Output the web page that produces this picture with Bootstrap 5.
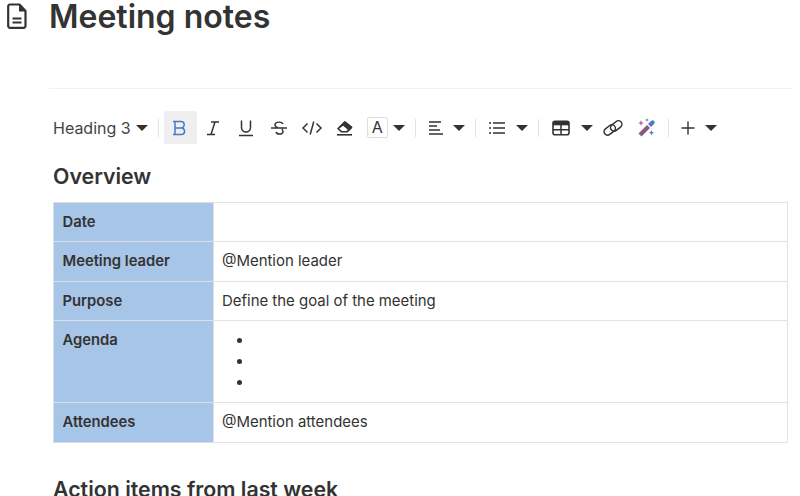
<!DOCTYPE html>
<html lang="en"><head><meta charset="utf-8"><title>Meeting notes</title>
<link href="https://cdn.jsdelivr.net/npm/bootstrap@5.3.0/dist/css/bootstrap.min.css" rel="stylesheet">
<style>
html,body{height:496px;overflow:hidden;background:#fff}
body{font-family:Inter,"Liberation Sans",sans-serif;color:#333;font-size:15px}
.page-wrap{padding-left:7px;padding-right:8px}
.doc-icon{width:42px;flex:none;padding-top:3px}
.doc-main{flex:1;min-width:0}
.doc-title{font-size:32px;font-weight:600;line-height:34px;margin:0;color:#333}
.doc-rule{height:1px;background:#f2f2f2;margin-top:54px;margin-bottom:22px}
.tool-bar{height:33px;padding-left:4px;color:#333}
.tool-label{font-size:16px;color:#444;margin-right:5px}
.tool-sep{width:1px;height:18px;background:#e3e3e3;flex:none}
.tool-btn{width:33px;height:33px;flex:none;display:flex;align-items:center;justify-content:center;border-radius:2px}
.tool-btn.on{background:#efefef}
.caret{width:0;height:0;border-left:6px solid transparent;border-right:6px solid transparent;border-top:6px solid #333;flex:none}
.color-box{width:21px;height:21px;border:1px solid #ddd;border-radius:2px;font-size:16px;line-height:19px;text-align:center;flex:none}
.gl-2{margin-left:2px}.gl-3{margin-left:3px}.gl-4{margin-left:4px}.gl-5{margin-left:5px}.gl-6{margin-left:6px}.gl-10{margin-left:10px}
.sec-head{font-size:21.33px;font-weight:600;line-height:24px;margin:0 0 0 4px;color:#333}
.first-head{margin-top:20px}
.notes-table{width:735px;margin:14px 0 0 4px;border-collapse:collapse;table-layout:fixed;font-size:14.95px;line-height:22px}
.notes-table th,.notes-table td{border:1px solid #e2e2e2;padding:8px 8px;vertical-align:top;height:39.4px}
.notes-table th{width:160px;background:#a7c5e6;font-weight:600;border-color:#d8dfe7;font-size:14.8px;padding-left:8.5px}
.notes-table td{font-weight:400;color:#333}
.notes-table ul{margin:0;padding:1px 0 0 32px;line-height:21px;height:65px}
.notes-table ul li{height:21px}
.notes-table ul li::marker{font-size:15px}
.next-head{margin-top:34px}
</style></head>
<body>
<div class="page-wrap d-flex">
  <div class="doc-icon">
    <svg width="20" height="26" viewBox="0 0 20 26"><path d="M3 1.500h9.500L18.500 8v15a1.800 1.800 0 0 1-1.800 1.800H3A1.800 1.800 0 0 1 1.200 23V3.300A1.800 1.800 0 0 1 3 1.500z" fill="none" stroke="#333" stroke-width="2.200" stroke-linejoin="round"/><path d="M12 1.500v7h6.500z" fill="#333"/><path d="M5.500 15.500h9M5.500 19.500h9" stroke="#333" stroke-width="1.800"/></svg>
  </div>
  <div class="doc-main">
    <h1 class="doc-title">Meeting notes</h1>
    <div class="doc-rule"></div>
    <div class="tool-bar d-flex align-items-center">
      <span class="tool-label">Heading 3</span><span class="caret"></span>
      <span class="tool-sep gl-10"></span>
      <span class="tool-btn on gl-5"><svg width="16" height="18" viewBox="0 0 16 18"><path d="M3 2.500h6a3.200 3.200 0 0 1 0 6.400H3zM3 8.900h7a3.400 3.400 0 0 1 0 6.600H3zM1 2.500h3M1 15.500h3" fill="none" stroke="#4a78c8" stroke-width="1.500"/></svg></span>
      <span class="tool-btn"><svg width="16" height="18" viewBox="0 0 16 18"><path d="M6 3h8M10 3L6 15.500M2 15.500h8" fill="none" stroke="#333" stroke-width="1.500"/></svg></span>
      <span class="tool-btn"><svg width="16" height="18" viewBox="0 0 16 18"><path d="M3.500 1.500v7a4.500 4.500 0 0 0 9 0v-7M1 16.500h14" fill="none" stroke="#333" stroke-width="1.500"/></svg></span>
      <span class="tool-btn"><svg width="18" height="18" viewBox="0 0 18 18"><path d="M1 9h16M13 5c-.5-2-7-3-8 .3C4.500 7 6 8 8 9M6 13c.5 2.500 6.500 3 7-.2.1-1-.4-1.800-1-2.800" fill="none" stroke="#333" stroke-width="1.400"/></svg></span>
      <span class="tool-btn"><svg width="20" height="16" viewBox="0 0 20 16"><path d="M5.500 3.500L1 8l4.500 4.500M14.500 3.500L19 8l-4.500 4.500M11.800 1.500L8.200 14.500" fill="none" stroke="#333" stroke-width="1.500"/></svg></span>
      <span class="tool-btn"><svg width="18" height="18" viewBox="0 0 18 18"><path d="M1 9.500L8 2.500a1.200 1.200 0 0 1 1.700 0l6.300 5a1.200 1.200 0 0 1 0 1.700L11.500 13.500H5z" fill="#333"/><path d="M3.200 9.600l2.600 2.400h4.700l1.300-1.300-4.600-4z" fill="#fff"/><path d="M1 15.800h15" stroke="#333" stroke-width="1.600"/></svg></span>
      <span class="color-box gl-5">A</span><span class="caret gl-5"></span>
      <span class="tool-sep gl-10"></span>
      <span class="tool-btn gl-4"><svg width="16" height="16" viewBox="0 0 16 16"><path d="M1 2h12M1 6h8M1 10h11M1 14h14" stroke="#333" stroke-width="1.300" fill="none"/></svg></span>
      <span class="caret"></span>
      <span class="tool-sep gl-10"></span>
      <span class="tool-btn gl-5"><svg width="18" height="16" viewBox="0 0 18 16"><path d="M5 3h12M5 8h12M5 13h12" stroke="#333" stroke-width="1.300"/><path d="M1 3h2M1 8h2M1 13h2" stroke="#333" stroke-width="1.600"/></svg></span>
      <span class="caret gl-2"></span>
      <span class="tool-sep gl-10"></span>
      <span class="tool-btn gl-6"><svg width="18" height="16" viewBox="0 0 18 16"><rect x="1" y="1.300" width="16" height="13.400" rx="2" fill="none" stroke="#333" stroke-width="1.600"/><path d="M1 1.300h16v4H1z" fill="#333"/><path d="M1 9.800h16M9 5v9.500" stroke="#333" stroke-width="1.500"/></svg></span>
      <span class="caret gl-3"></span>
      <span class="tool-btn gl-4"><svg width="20" height="18" viewBox="0 0 20 18"><g fill="none" stroke="#333" stroke-width="1.500"><rect x="0.500" y="7.500" width="12.500" height="7" rx="3.500" transform="rotate(-38 6.700 11)"/><rect x="7" y="3.500" width="12.500" height="7" rx="3.500" transform="rotate(-38 13.200 7)"/></g></svg></span>
      <span class="tool-btn"><svg width="20" height="20" viewBox="0 0 20 20"><path d="M2.500 15.500L11 7l3 3-8.500 8.500z" fill="#8a5a7c"/><path d="M12 6l3-3c1-1 2-1 3 0s1 2 0 3l-3 3z" fill="#4f7cc8"/><path d="M5 2l.8 2.200 2.200.8-2.200.8L5 8l-.8-2.200L2 5l2.200-.8z" fill="#a8688f"/><path d="M11 0l.5 1.500 1.500.5-1.500.5-.5 1.500-.5-1.500L9 2l1.500-.5z" fill="#7a6ab0"/><path d="M15.500 12l.8 1.900 1.900.8-1.900.8-.8 1.900-.8-1.900-1.900-.8 1.900-.8z" fill="#4f7cc8"/></svg></span>
      <span class="tool-sep gl-5"></span>
      <span class="tool-btn gl-3"><svg width="16" height="16" viewBox="0 0 16 16"><path d="M8 1.500v13M1.500 8h13" stroke="#333" stroke-width="1.400"/></svg></span>
      <span class="caret"></span>
    </div>
    <h3 class="sec-head first-head">Overview</h3>
    <table class="notes-table">
      <tbody>
        <tr><th>Date</th><td></td></tr>
        <tr><th>Meeting leader</th><td>@Mention leader</td></tr>
        <tr><th>Purpose</th><td>Define the goal of the meeting</td></tr>
        <tr><th>Agenda</th><td><ul><li></li><li></li><li></li></ul></td></tr>
        <tr><th>Attendees</th><td>@Mention attendees</td></tr>
      </tbody>
    </table>
    <h3 class="sec-head next-head">Action items from last week</h3>
  </div>
</div>
<script src="https://cdn.jsdelivr.net/npm/bootstrap@5.3.0/dist/js/bootstrap.bundle.min.js"></script>
</body></html>
